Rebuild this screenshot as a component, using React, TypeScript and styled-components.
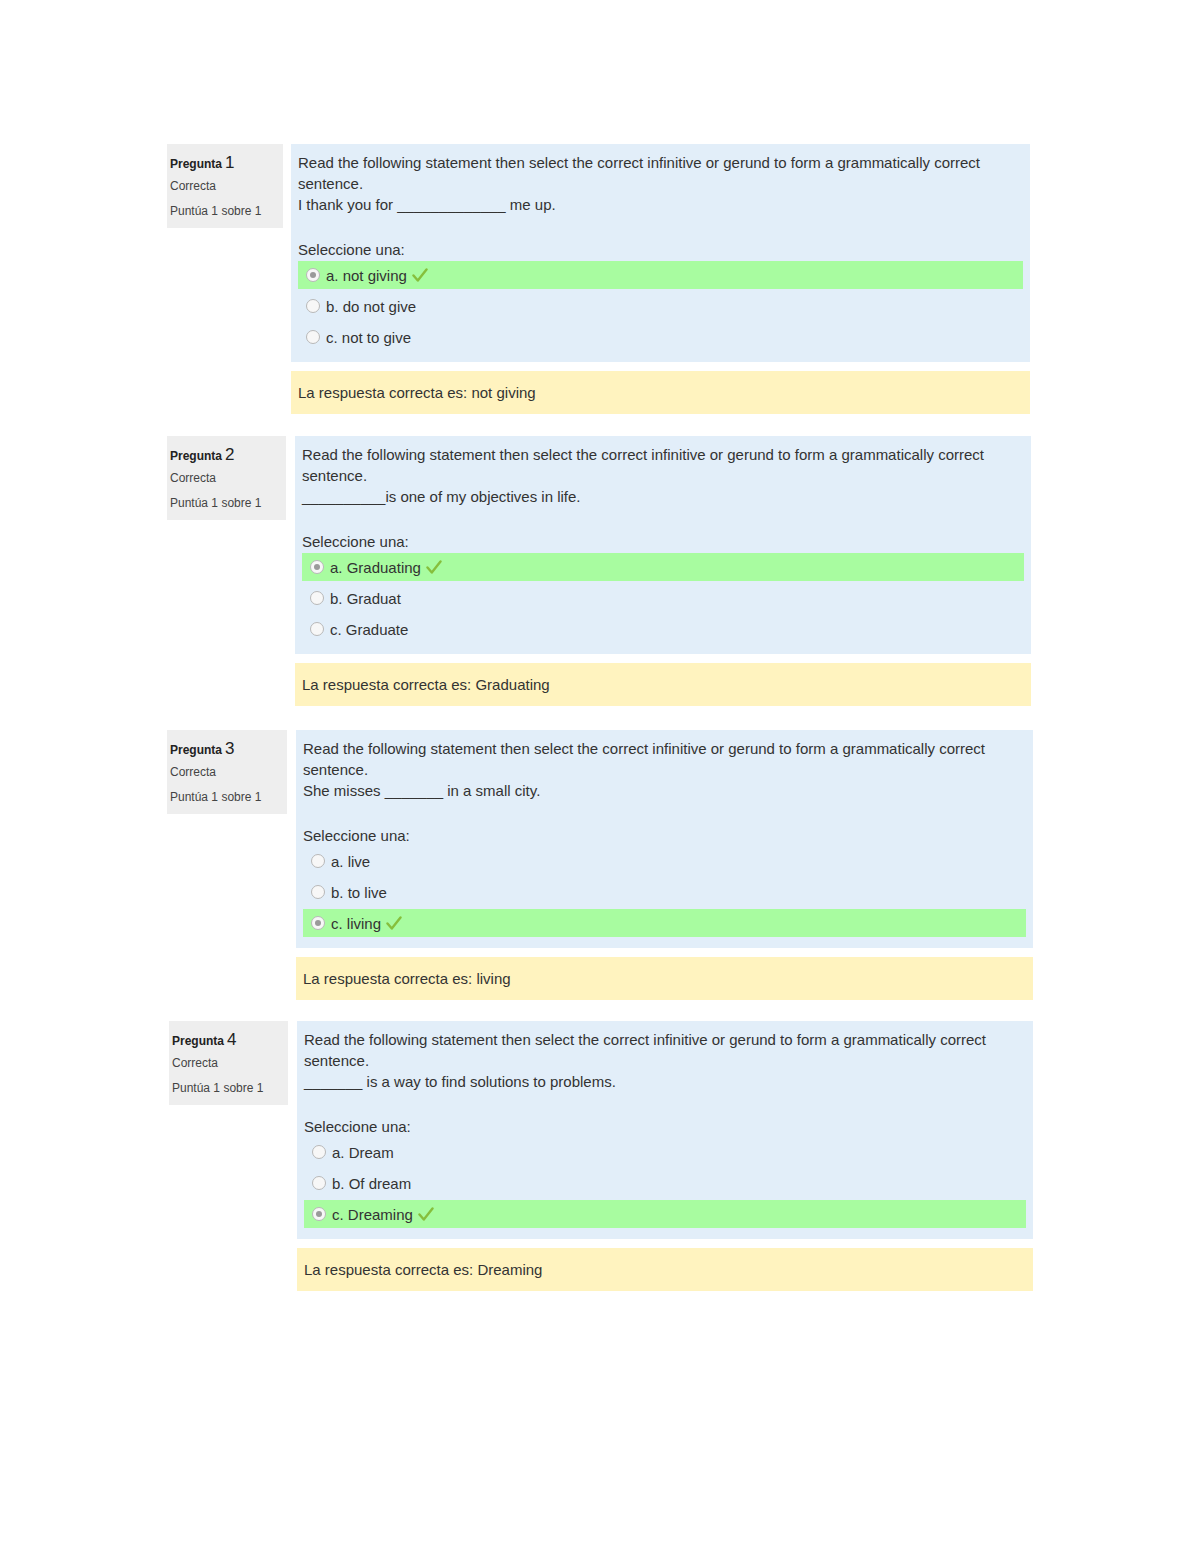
import React from "react";
import styled, { createGlobalStyle } from "styled-components";

const Global = createGlobalStyle`
  html, body { margin: 0; padding: 0; background: #ffffff; }
  body { font-family: "Liberation Sans", Arial, sans-serif; color: #333333; }
`;

const Page = styled.div`
  width: 1200px;
  min-height: 1553px;
  padding-top: 144px;
  box-sizing: border-box;
`;

const QuestionRow = styled.div<{ $left: number; $gap: number; $mb: number }>`
  display: flex;
  align-items: flex-start;
  gap: ${(p) => p.$gap}px;
  padding-left: ${(p) => p.$left}px;
  margin-bottom: ${(p) => p.$mb}px;
`;

const InfoBox = styled.div<{ $w: number }>`
  width: ${(p) => p.$w}px;
  height: 84px;
  box-sizing: border-box;
  background: #eeeeee;
  padding: 7px 0 0 3px;
  font-size: 12px;
  color: #444444;
`;

const QNo = styled.div`
  font-size: 12px;
  font-weight: bold;
  color: #222222;
  height: 23px;
  line-height: 23px;
  span {
    font-size: 17px;
    font-weight: normal;
    margin-left: 3px;
  }
`;

const InfoLine = styled.div`
  height: 25px;
  line-height: 25px;
`;

const Column = styled.div<{ $w: number }>`
  width: ${(p) => p.$w}px;
  display: flex;
  flex-direction: column;
  gap: 9px;
`;

const Content = styled.div`
  background: #e2eef9;
  padding: 8px 7px 11px 7px;
  font-size: 15px;
  line-height: 21px;
  color: #333333;
`;

const QText = styled.div`
  margin-bottom: 24px;
`;

const Prompt = styled.div`
  margin-bottom: 1px;
`;

const Option = styled.div<{ $correct?: boolean }>`
  display: flex;
  align-items: center;
  height: 28px;
  margin-bottom: 3px;
  padding-left: 8px;
  background: ${(p) => (p.$correct ? "#a8fca0" : "transparent")};
  &:last-child { margin-bottom: 0; }
`;

const Radio = styled.span<{ $checked?: boolean }>`
  width: 12px;
  height: 12px;
  border-radius: 50%;
  border: 1px solid #b8b8b8;
  background: #f7f7f7;
  box-sizing: content-box;
  margin-right: 6px;
  display: inline-flex;
  align-items: center;
  justify-content: center;
  &::after {
    content: "";
    width: 6px;
    height: 6px;
    border-radius: 50%;
    background: ${(p) => (p.$checked ? "#9a9a9a" : "transparent")};
  }
`;

const Check = styled.svg`
  margin-left: 5px;
  width: 16px;
  height: 16px;
`;

const Feedback = styled.div`
  background: #fff3bf;
  height: 43px;
  box-sizing: border-box;
  padding: 0 7px;
  display: flex;
  align-items: center;
  font-size: 15px;
  color: #333333;
`;

type Q = {
  n: number;
  sentence: string;
  options: string[];
  correct: number;
  answer: string;
  left: number;
  infoW: number;
  gap: number;
  colW: number;
  mb: number;
};

const INTRO =
  "Read the following statement then select the correct infinitive or gerund to form a grammatically correct sentence.";

const questions: Q[] = [
  {
    n: 1,
    sentence: "I thank you for _____________ me up.",
    options: ["a. not giving", "b. do not give", "c. not to give"],
    correct: 0,
    answer: "not giving",
    left: 167,
    infoW: 116,
    gap: 8,
    colW: 739,
    mb: 22,
  },
  {
    n: 2,
    sentence: "__________is one of my objectives in life.",
    options: ["a. Graduating", "b. Graduat", "c. Graduate"],
    correct: 0,
    answer: "Graduating",
    left: 167,
    infoW: 119,
    gap: 9,
    colW: 736,
    mb: 24,
  },
  {
    n: 3,
    sentence: "She misses _______ in a small city.",
    options: ["a. live", "b. to live", "c. living"],
    correct: 2,
    answer: "living",
    left: 167,
    infoW: 120,
    gap: 9,
    colW: 737,
    mb: 21,
  },
  {
    n: 4,
    sentence: "_______ is a way to find solutions to problems.",
    options: ["a. Dream", "b. Of dream", "c. Dreaming"],
    correct: 2,
    answer: "Dreaming",
    left: 169,
    infoW: 119,
    gap: 9,
    colW: 736,
    mb: 0,
  },
];

const CheckIcon = () => (
  <Check viewBox="0 0 16 16">
    <path
      d="M1.5 8.5 L5.8 13.5 L14.5 2.5"
      fill="none"
      stroke="#86bf3c"
      strokeWidth="2.4"
      strokeLinecap="round"
      strokeLinejoin="round"
    />
  </Check>
);

export default function App() {
  return (
    <Page>
      <Global />
      {questions.map((q) => (
        <QuestionRow key={q.n} $left={q.left} $gap={q.gap} $mb={q.mb}>
          <InfoBox $w={q.infoW}>
            <QNo>
              Pregunta<span>{q.n}</span>
            </QNo>
            <InfoLine>Correcta</InfoLine>
            <InfoLine>Puntúa 1 sobre 1</InfoLine>
          </InfoBox>
          <Column $w={q.colW}>
            <Content>
              <QText>
                {INTRO}
                <br />
                {q.sentence}
              </QText>
              <Prompt>Seleccione una:</Prompt>
              {q.options.map((o, i) => (
                <Option key={o} $correct={i === q.correct}>
                  <Radio $checked={i === q.correct} />
                  {o}
                  {i === q.correct && <CheckIcon />}
                </Option>
              ))}
            </Content>
            <Feedback>La respuesta correcta es: {q.answer}</Feedback>
          </Column>
        </QuestionRow>
      ))}
    </Page>
  );
}
